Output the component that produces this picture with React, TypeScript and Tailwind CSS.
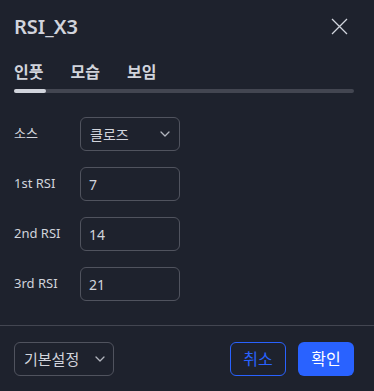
import React from "react";

const font = { fontFamily: '"Noto Sans", "Noto Sans CJK KR", sans-serif' };

function Chevron() {
  return (
    <svg width="10" height="6" viewBox="0 0 10 6" fill="none">
      <path d="M1 1l4 4 4-4" stroke="#b2b5be" strokeWidth="1.3" strokeLinecap="round" strokeLinejoin="round" />
    </svg>
  );
}

function Row({ label, children }: { label: string; children: React.ReactNode }) {
  return (
    <div className="flex items-center h-[34px]">
      <div className="w-[66px] text-[13px] text-[#d1d4dc]">{label}</div>
      {children}
    </div>
  );
}

function Input({ value }: { value: string }) {
  return (
    <div className="w-[100px] h-[34px] border border-[#50535e] rounded-[6px] flex items-center px-[8px] text-[14px] text-[#d1d4dc]">
      {value}
    </div>
  );
}

export default function App() {
  return (
    <div className="w-[374px] h-[391px] bg-[#1e222d] flex flex-col" style={font}>
      <div className="h-[53px] px-[14px] flex items-center justify-between">
        <div className="text-[20px] font-semibold text-[#d1d4dc]">RSI_X3</div>
        <svg width="17" height="17" viewBox="0 0 17 17" className="mr-[12px]">
          <path d="M1 1l15 15M16 1L1 16" stroke="#d1d4dc" strokeWidth="1.3" />
        </svg>
      </div>
      <div className="px-[14px]">
        <div className="flex gap-[27px] h-[36px] items-center pt-[2px] text-[16px] font-semibold text-[#d1d4dc]">
          <span>인풋</span>
          <span>모습</span>
          <span>보임</span>
        </div>
        <div className="h-[4px] w-[340px] rounded-full bg-[#434651] flex">
          <div className="w-[32px] h-full rounded-full bg-[#d1d4dc]" />
        </div>
      </div>
      <div className="px-[14px] pt-[24px] flex flex-col gap-[16px]">
        <Row label="소스">
          <div className="w-[100px] h-[34px] border border-[#50535e] rounded-[6px] flex items-center justify-between pl-[9px] pr-[9px] text-[14px] text-[#d1d4dc]">
            <span>클로즈</span>
            <Chevron />
          </div>
        </Row>
        <Row label="1st RSI"><Input value="7" /></Row>
        <Row label="2nd RSI"><Input value="14" /></Row>
        <Row label="3rd RSI"><Input value="21" /></Row>
      </div>
      <div className="mt-[24px] h-px bg-[#434651]" />
      <div className="px-[14px] pt-[16px] flex items-center justify-between">
        <div className="w-[100px] h-[34px] border border-[#50535e] rounded-[6px] flex items-center justify-between pl-[9px] pr-[8px] text-[15px] text-[#d1d4dc]">
          <span>기본설정</span>
          <Chevron />
        </div>
        <div className="flex gap-[12px] mr-[6px]">
          <button className="w-[56px] h-[34px] border border-[#2962ff] rounded-[6px] text-[16px] text-[#2962ff]">취소</button>
          <button className="w-[56px] h-[34px] bg-[#2962ff] rounded-[6px] text-[16px] text-white">확인</button>
        </div>
      </div>
    </div>
  );
}
